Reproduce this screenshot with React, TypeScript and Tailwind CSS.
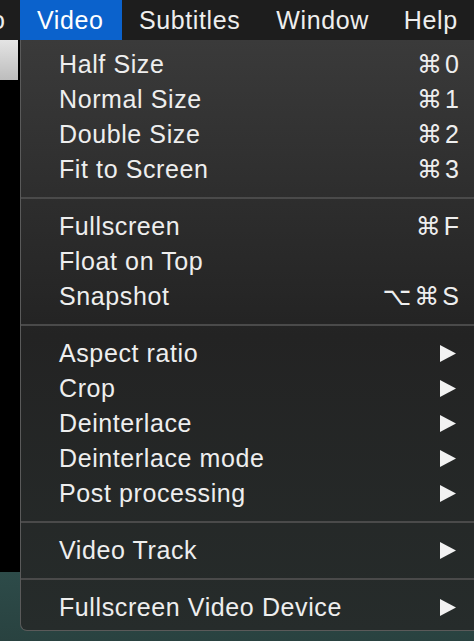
import React from "react";

type Item = { label: string; shortcut?: string; sub?: boolean };

const groups: Item[][] = [
  [
    { label: "Half Size", shortcut: "⌘0" },
    { label: "Normal Size", shortcut: "⌘1" },
    { label: "Double Size", shortcut: "⌘2" },
    { label: "Fit to Screen", shortcut: "⌘3" },
  ],
  [
    { label: "Fullscreen", shortcut: "⌘F" },
    { label: "Float on Top" },
    { label: "Snapshot", shortcut: "⌥⌘S" },
  ],
  [
    { label: "Aspect ratio", sub: true },
    { label: "Crop", sub: true },
    { label: "Deinterlace", sub: true },
    { label: "Deinterlace mode", sub: true },
    { label: "Post processing", sub: true },
  ],
  [{ label: "Video Track", sub: true }],
  [{ label: "Fullscreen Video Device", sub: true }],
];

function Arrow() {
  return (
    <svg width="16" height="17" viewBox="0 0 16 17" className="block">
      <path d="M0 0 L16 8.5 L0 17 Z" fill="#f2f2f2" />
    </svg>
  );
}

function Row({ item }: { item: Item }) {
  return (
    <div className="h-[35px] flex items-center justify-between pl-[38px]">
      <span className="text-[25px] leading-none text-[#eeeeee] tracking-[0.6px]">{item.label}</span>
      {item.shortcut && (
        <span className="pr-[28px] text-[25px] leading-none text-[#eeeeee] tracking-[3px]">
          {item.shortcut}
        </span>
      )}
      {item.sub && (
        <span className="pr-[34px]">
          <Arrow />
        </span>
      )}
    </div>
  );
}

export default function App() {
  return (
    <div
      className="relative w-[474px] h-[641px] overflow-hidden bg-black"
      style={{ fontFamily: '"Liberation Sans", "DejaVu Sans", sans-serif' }}
    >
      {/* desktop background */}
      <div className="flex flex-col h-full">
        <div className="h-[40px] flex items-center bg-[#1d1d1d] shrink-0 tracking-[0.6px]">
          <div className="w-[20px] h-full flex items-center overflow-hidden">
            <span className="text-[25px] text-[#eeeeee] leading-none -ml-[9px]">o</span>
          </div>
          <div className="h-full w-[102px] bg-[#0b62cc] flex items-center pl-[17px]">
            <span className="text-[25px] text-white leading-none">Video</span>
          </div>
          <span className="ml-[17px] text-[25px] text-[#eeeeee] leading-none">Subtitles</span>
          <span className="ml-[36px] text-[25px] text-[#eeeeee] leading-none">Window</span>
          <span className="ml-[35px] text-[25px] text-[#eeeeee] leading-none">Help</span>
        </div>
        <div className="flex-1 flex flex-col">
          <div className="h-[40px] w-[18px] bg-gradient-to-b from-[#e4e4e4] to-[#bdbdbd]" />
          <div className="flex-1 bg-black" />
          <div className="h-[69px] bg-gradient-to-b from-[#2d4b49] to-[#294240]" />
        </div>
      </div>

      {/* menu panel */}
      <div className="absolute left-[20px] top-[40px] w-[470px] h-[591px] rounded-b-[7px] border-l border-b border-[#5a5a5a] bg-gradient-to-b from-[#3a3a3a] via-[#232323] to-[#262c2b] pt-[7px]">
        {groups.map((g, gi) => (
          <div key={gi}>
            {gi > 0 && (
              <div className="h-[22px] flex items-center">
                <div className="h-[2px] w-full bg-[#4a4a4a]" />
              </div>
            )}
            {g.map((it) => (
              <Row key={it.label} item={it} />
            ))}
          </div>
        ))}
      </div>
    </div>
  );
}
